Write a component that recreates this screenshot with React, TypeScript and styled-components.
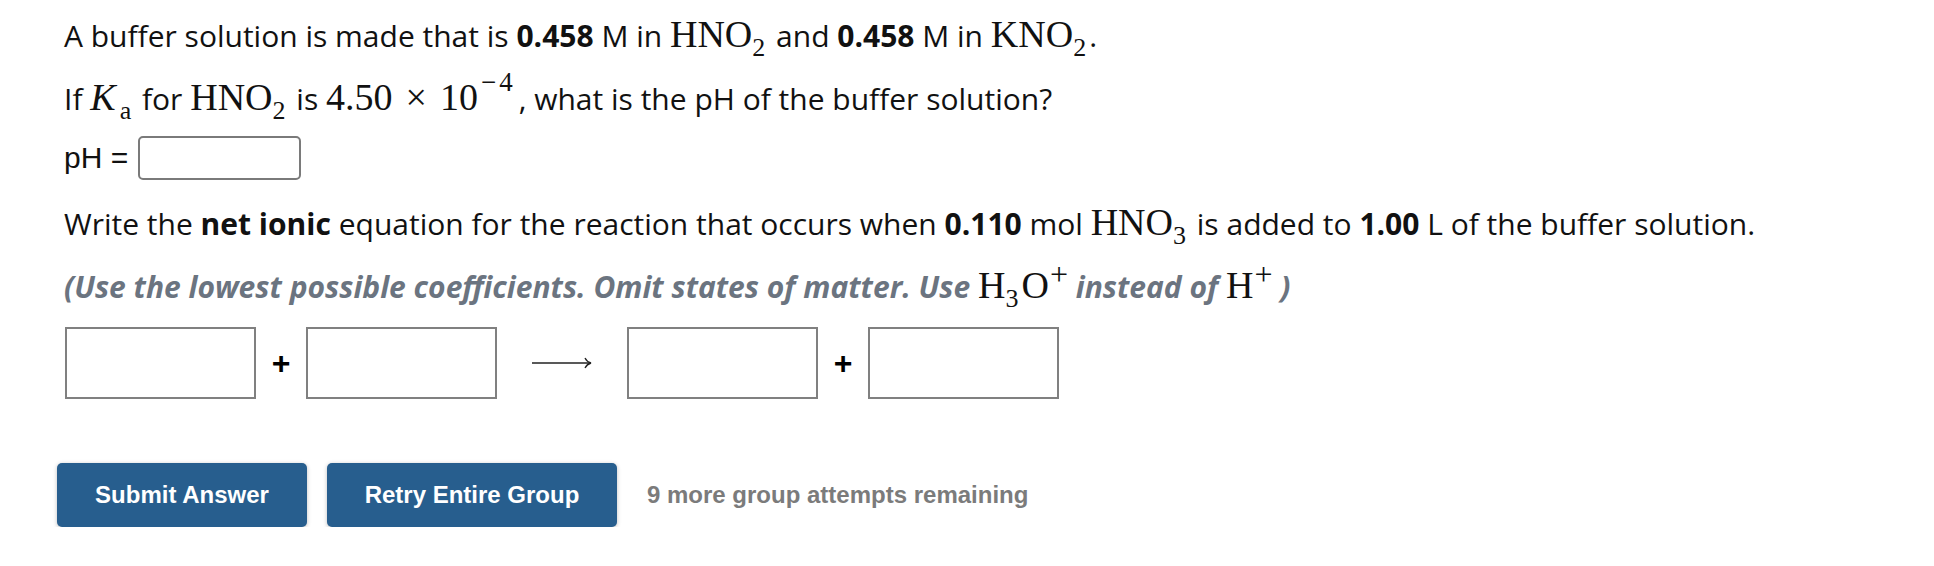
import React from 'react';
import styled, { createGlobalStyle } from 'styled-components';

const GlobalStyle = createGlobalStyle`
  html, body {
    margin: 0;
    padding: 0;
    background: #ffffff;
  }
  body {
    font-family: 'Open Sans', 'Liberation Sans', sans-serif;
    color: #111111;
  }
`;

const Page = styled.div`
  padding: 12px 0 0 64px;
  display: flex;
  flex-direction: column;
  align-items: flex-start;
`;

const Line = styled.p<{ $gap?: number }>`
  margin: 0 0 ${({ $gap }) => $gap ?? 20}px 0;
  height: 44px;
  font-size: 30px;
  line-height: 44px;
  white-space: nowrap;
`;

const Note = styled.p`
  margin: 0 0 20px 0;
  height: 44px;
  font-size: 30px;
  line-height: 44px;
  font-style: italic;
  font-weight: 700;
  color: #6b7480;
  white-space: nowrap;
`;

const Chem = styled.span`
  font-family: 'Liberation Serif', 'DejaVu Serif', serif;
  font-size: 38px;
  font-style: normal;
  font-weight: 400;
  color: #111111;

  sub {
    font-size: 26px;
    line-height: 0;
    margin-right: 3px;
  }
`;

const Sup = styled.sup<{ $charge?: boolean }>`
  font-size: ${({ $charge }) => ($charge ? 32 : 27)}px;
  line-height: 0;
  vertical-align: baseline;
  position: relative;
  top: ${({ $charge }) => ($charge ? -0.42 : -0.72)}em;
  margin-left: ${({ $charge }) => ($charge ? 1 : 3)}px;
  margin-right: ${({ $charge }) => ($charge ? 0 : 3)}px;
  letter-spacing: ${({ $charge }) => ($charge ? 0 : 3)}px;
`;

const Times = styled.span`
  margin: 0 13px;
`;

const MathItalic = styled.span`
  font-style: italic;
  margin-right: 4px;
`;

const PhRow = styled.div`
  display: flex;
  align-items: center;
  gap: 10px;
  margin-bottom: 20px;
  font-family: 'Liberation Sans', Arial, sans-serif;
  font-size: 30px;
`;

const PhInput = styled.div`
  width: 159px;
  height: 40px;
  border: 2px solid #7a7a7a;
  border-radius: 5px;
`;

const EquationRow = styled.div`
  display: flex;
  align-items: center;
  margin: 0 0 64px 1px;
`;

const AnswerBox = styled.div`
  width: 187px;
  height: 68px;
  border: 2px solid #808080;
`;

const Plus = styled.span`
  width: 50px;
  text-align: center;
  font-family: 'Liberation Sans', Arial, sans-serif;
  font-weight: 700;
  font-size: 32px;
  line-height: 1;
  color: #000000;
`;

const Arrow = styled.svg`
  margin: 0 35px;
`;

const ButtonRow = styled.div`
  display: flex;
  align-items: center;
  gap: 20px;
  margin-left: -7px;
`;

const Button = styled.button<{ $width: number }>`
  width: ${({ $width }) => $width}px;
  height: 64px;
  border: none;
  border-radius: 5px;
  background: #275e8e;
  color: #ffffff;
  font-family: 'Liberation Sans', Arial, sans-serif;
  font-weight: 700;
  font-size: 24px;
  box-shadow: 0 1px 4px rgba(0, 0, 0, 0.25);
  cursor: pointer;
`;

const Attempts = styled.span`
  font-family: 'Liberation Sans', Arial, sans-serif;
  font-weight: 700;
  font-size: 24px;
  color: #7b7b7b;
  margin-left: 10px;
`;

const Formula: React.FC<{ base: string; sub?: string; charge?: string }> = ({ base, sub, charge }) => (
  <Chem>
    {base}
    {sub && <sub>{sub}</sub>}
    {charge && <Sup $charge>{charge}</Sup>}
  </Chem>
);

export default function App() {
  return (
    <>
      <GlobalStyle />
      <Page>
        <Line $gap={19}>
          A buffer solution is made that is <b>0.458</b> M in <Formula base="HNO" sub="2" /> and{' '}
          <b>0.458</b> M in <Formula base="KNO" sub="2" />.
        </Line>
        <Line $gap={17}>
          If{' '}
          <Chem>
            <MathItalic>K</MathItalic>
            <sub>a</sub>
          </Chem>{' '}
          for <Formula base="HNO" sub="2" /> is{' '}
          <Chem>
            4.50<Times>×</Times>10<Sup>−4</Sup>
          </Chem>
          , what is the pH of the buffer solution?
        </Line>
        <PhRow>
          <span>pH =</span>
          <PhInput />
        </PhRow>
        <Line $gap={19}>
          Write the <b>net ionic</b> equation for the reaction that occurs when <b>0.110</b> mol{' '}
          <Formula base="HNO" sub="3" /> is added to <b>1.00</b> L of the buffer solution.
        </Line>
        <Note>
          (Use the lowest possible coefficients. Omit states of matter. Use{' '}
          <Formula base="H" sub="3" />
          <Formula base="O" charge="+" /> instead of <Formula base="H" charge="+" /> )
        </Note>
        <EquationRow>
          <AnswerBox />
          <Plus>+</Plus>
          <AnswerBox />
          <Arrow width="60" height="14" viewBox="0 0 60 14">
            <line x1="0" y1="7" x2="58" y2="7" stroke="#222" strokeWidth="1.6" />
            <path d="M53 2 Q55 6 59 7 Q55 8 53 12" fill="none" stroke="#222" strokeWidth="1.3" />
          </Arrow>
          <AnswerBox />
          <Plus>+</Plus>
          <AnswerBox />
        </EquationRow>
        <ButtonRow>
          <Button $width={250}>Submit Answer</Button>
          <Button $width={290}>Retry Entire Group</Button>
          <Attempts>9 more group attempts remaining</Attempts>
        </ButtonRow>
      </Page>
    </>
  );
}
